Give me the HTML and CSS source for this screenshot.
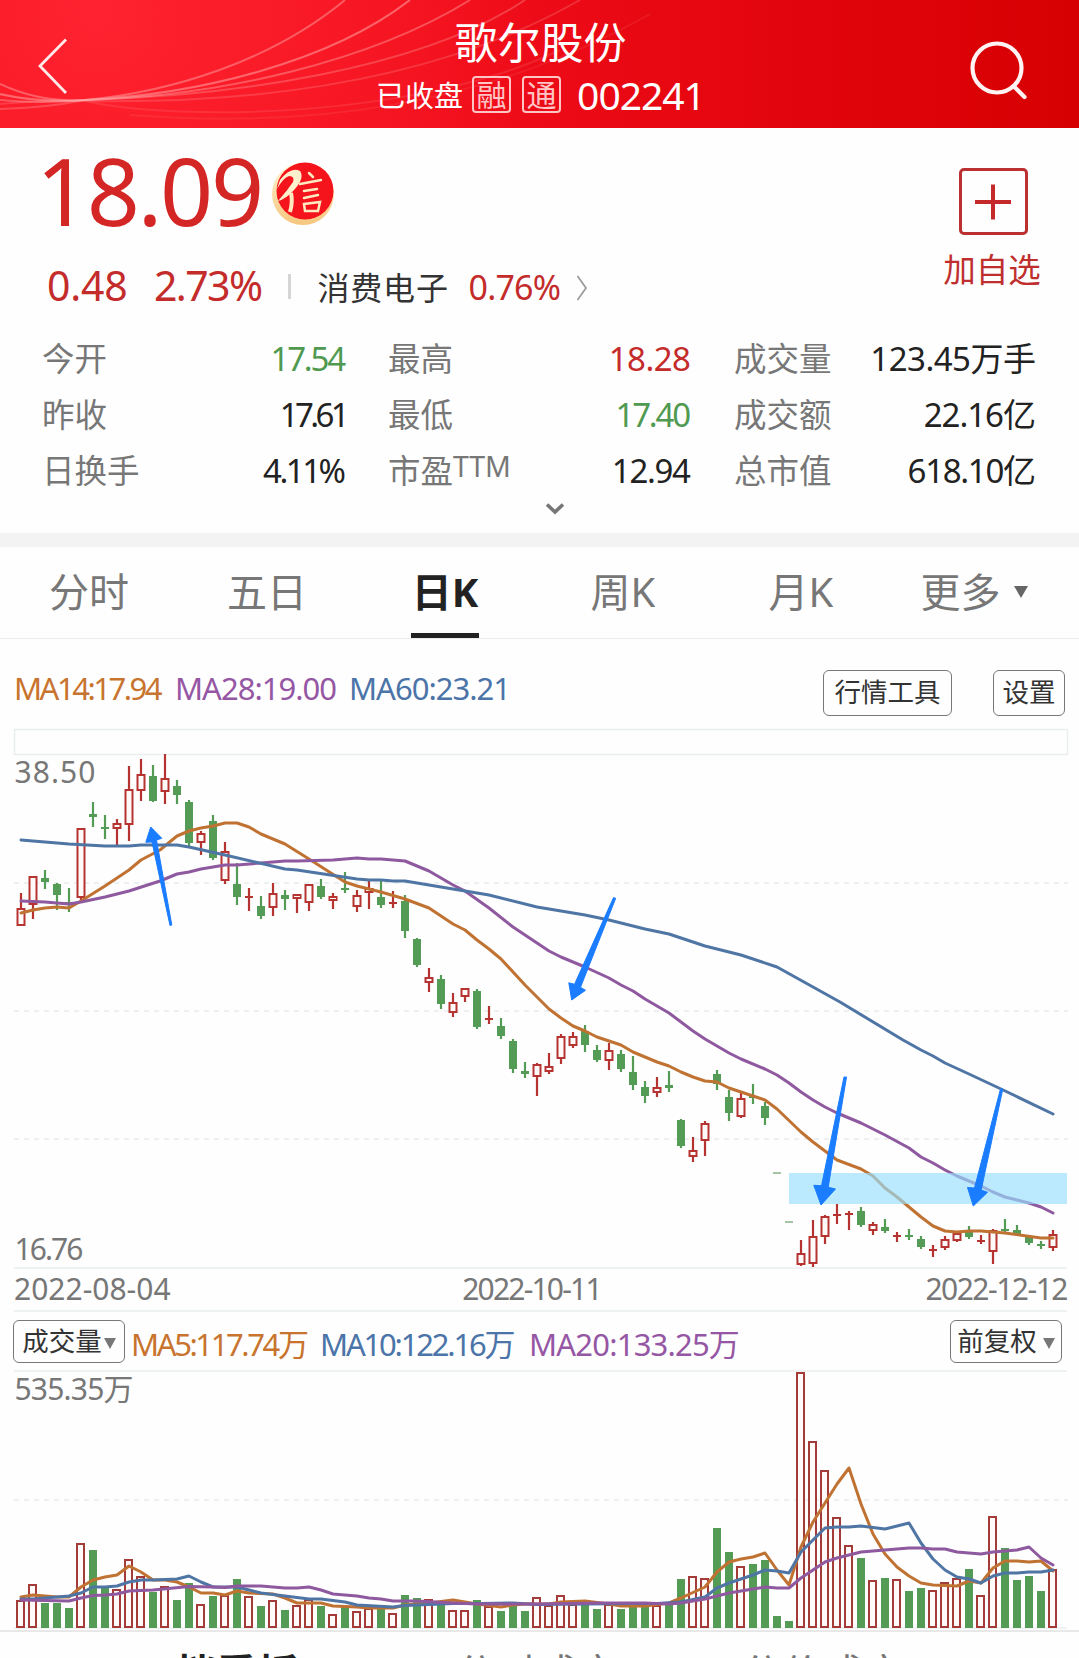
FILE: index.html
```html
<!DOCTYPE html>
<html lang="zh-CN">
<head>
<meta charset="utf-8">
<title>歌尔股份 002241</title>
<link rel="stylesheet" href="styles.css">
</head>
<body>
<div class="page">
  <header class="top">
    <svg class="top-waves" width="1079" height="128" viewBox="0 0 1079 128" fill="none" stroke="#ffb0b0">
      <path d="M0 84Q40 103 85 100C170 92 270 62 345 0" stroke-width="2" opacity=".45"/>
      <path d="M0 94Q40 103 85 100C200 94 330 62 410 0" stroke-width="2.2" opacity=".5"/>
      <path d="M0 100Q40 104 85 100C220 96 370 62 470 0" stroke-width="2" opacity=".4"/>
      <path d="M0 109Q45 108 85 100C230 96 420 70 525 0" stroke-width="2" opacity=".3"/>
      <path d="M0 104Q45 100 85 101C260 104 440 80 580 0" stroke-width="2" opacity=".22"/>
      <path d="M85 101C180 122 420 118 560 50" stroke-width="2" opacity=".14"/>
      <path d="M130 115C300 128 480 110 650 14" stroke-width="2" opacity=".1"/>
    </svg>
    <svg class="back" width="34" height="60" viewBox="0 0 34 60" fill="none" stroke="#ffe9e9" stroke-width="2.8"><path d="M29 3.5L3 30L29 57"/></svg>
    <div class="top-title">
      <h1>歌尔股份</h1>
      <div class="top-sub"><span class="closed">已收盘</span><span class="tag">融</span><span class="tag">通</span><span class="code">002241</span></div>
    </div>
    <svg class="search" width="62" height="62" viewBox="0 0 62 62" fill="none" stroke="#fff3f3" stroke-width="4.2" stroke-linecap="round"><circle cx="29" cy="29" r="24.5"/><path d="M46 47.5L56.5 58"/></svg>
  </header>

  <section class="quote">
    <div class="quote-main">
      <div class="quote-left">
        <div class="price-row">
          <span class="price">18.09</span>
          <svg class="seal" width="64" height="64" viewBox="0 0 64 64">
            <defs><linearGradient id="gold" x1="0" y1="0" x2="0" y2="1"><stop offset="0" stop-color="#fff3cf"/><stop offset="1" stop-color="#f6c77f"/></linearGradient></defs>
            <circle cx="32" cy="32" r="31" fill="url(#gold)"/>
            <circle cx="34" cy="29" r="28.5" fill="#f5141c"/>
            <path d="M9 18Q20 4 29 9Q34 16 23 28Q15 37 7 39Q16 29 22 20Q24 14 18 14Q12 16 6 27Z" fill="#fff0cd"/>
            <path d="M20 31Q22 40 19 50" stroke="#ffe9c0" stroke-width="4" fill="none"/>
            <g stroke="#ffe9c0" stroke-width="2.5" fill="none" stroke-linecap="round"><path d="M38 11L42 15M29 22L50 18M33 29L46 27M33 36L47 33M33 42L49 40L47 49H34Z"/></g>
          </svg>
        </div>
        <div class="change-row">
          <span class="chg up">0.48</span><span class="pct up">2.73%</span><i class="sep"></i>
          <span class="sector">消费电子</span><span class="sector-pct up">0.76%</span>
          <svg class="more" width="12" height="26" viewBox="0 0 12 26" fill="none" stroke="#999" stroke-width="1.7"><path d="M1.5 1L10 13L1.5 25"/></svg>
        </div>
      </div>
      <div class="add">
        <div class="add-box"><svg width="40" height="40" viewBox="0 0 40 40" stroke="#c42a2a" stroke-width="4"><path d="M2 20H38M20 2.500V37.500"/></svg></div>
        <span>加自选</span>
      </div>
    </div>
    <div class="stats">
      <span class="k">今开</span><span class="v down k22">17.54</span>
      <span class="k">最高</span><span class="v up k05">18.28</span>
      <span class="k">成交量</span><span class="v k05">123.45万手</span>
      <span class="k">昨收</span><span class="v k36">17.61</span>
      <span class="k">最低</span><span class="v down k22">17.40</span>
      <span class="k">成交额</span><span class="v k10">22.16亿</span>
      <span class="k">日换手</span><span class="v k25">4.11%</span>
      <span class="k">市盈<small>TTM</small></span><span class="v k13">12.94</span>
      <span class="k">总市值</span><span class="v k13">618.10亿</span>
    </div>
    <svg class="expand" width="20" height="14" viewBox="0 0 20 14" fill="none" stroke="#777" stroke-width="3.6"><path d="M2 2.500L10 10L18 2.500"/></svg>
  </section>

  <nav class="tabs">
    <span>分时</span><span>五日</span><span class="active"><b>日K</b></span><span>周K</span><span>月K</span><span class="last">更多<i class="tri"></i></span>
  </nav>

  <div class="ma-row">
    <span class="c-orange m1 k25">MA14:17.94</span><span class="c-purple m2 k10">MA28:19.00</span><span class="c-blue k10">MA60:23.21</span>
    <span class="btn tools">行情工具</span><span class="btn">设置</span>
  </div>

  <svg id="kline" class="chart" width="1079" height="548" viewBox="0 722 1079 548"></svg>

  <div class="dates"><span>2022-08-04</span><span class="mid k18">2022-10-11</span><span class="k15">2022-12-12</span></div>

  <div class="vol-row">
    <span class="btn vsel">成交量<i class="tri"></i></span>
    <span class="c-orange n1 k24">MA5:117.74万</span><span class="c-blue n2 k22">MA10:122.16万</span><span class="c-purple k09">MA20:133.25万</span>
    <span class="btn adj">前复权<i class="tri"></i></span>
  </div>

  <svg id="volume" class="chart" width="1079" height="260" viewBox="0 1370 1079 260"></svg>

  <nav class="bottom-tabs"><b>五档看板</b><span>分时成交</span><span>分价成交</span></nav>
</div>
<script src="chart.js"></script>
</body>
</html>
```
FILE: styles.css
```css
* { box-sizing: border-box; }
body { margin: 0; background: #fefefe; font-family: "Noto Sans", "Noto Sans CJK SC", sans-serif; color: #222; }
.page { width: 1079px; height: 1658px; overflow: hidden; display: flex; flex-direction: column; }
.page > * { flex-shrink: 0; }
.up { color: #c42b2b; }
.down { color: #4f9a50; }
.c-orange { color: #c8742e; }
.c-purple { color: #9557a4; }
.c-blue { color: #4b74a8; }

.k05 { --ls: -.5px; } .k09 { --ls: -.8px; } .k10 { --ls: -1px; } .k13 { --ls: -1.3px; }
.k15 { --ls: -1.5px; } .k18 { --ls: -1.8px; } .k22 { --ls: -2.2px; }
.k24 { --ls: -2.4px; } .k25 { --ls: -2.5px; } .k36 { --ls: -3.6px; }
[class*="k"] { letter-spacing: var(--ls, normal); }

.top { position: relative; height: 128px; display: flex; align-items: center; justify-content: space-between; padding: 0 51px 0 37px; color: #fff; background: radial-gradient(circle at 9% 10%, #ff2230 0, #fb1c29 15%, transparent 45%), linear-gradient(90deg, #fa1a26 0, #ee0c18 45%, #e2040c 75%, #d60002 100%); }
.top-waves { position: absolute; left: 0; top: 0; }
.back { position: relative; margin-top: 4px; width: 34px; }
.search { position: relative; margin: 12px -2px 0 0; }
.top-title { position: relative; margin-left: 42px; padding-top: 5px; display: flex; flex-direction: column; align-items: center; }
.top-title h1 { margin: 3px 0 0; font-size: 43px; line-height: 52px; font-weight: 400; }
.top-sub { display: flex; align-items: center; height: 51px; font-size: 29px; }
.tag { width: 39px; height: 37px; margin-left: 11px; border: 2px solid #ffc5c5; border-radius: 4px; color: #ffc5c5; font-size: 30px; line-height: 33px; text-align: center; }
.closed { margin-right: -2px; }
.code { margin-left: 16px; font-size: 39px; letter-spacing: -1px; }

.quote { height: 405px; display: flex; flex-direction: column; }
.quote-main { display: flex; justify-content: space-between; height: 203px; }
.price-row { display: flex; align-items: center; height: 123px; padding-left: 36px; }
.price { font-size: 93px; letter-spacing: -2.4px; line-height: 123px; color: #d52626; width: 235px; margin-top: 2px; }
.seal { margin-top: 8px; }
.change-row { display: flex; align-items: center; height: 70px; padding-left: 47px; }
.chg { font-size: 41px; width: 107px; letter-spacing: -.2px; margin-top: -3px; }
.pct { font-size: 41px; width: 134px; letter-spacing: -1.6px; margin-top: -3px; }
.sep { width: 2.500px; height: 25px; background: #d5d5d5; margin-right: 27px; }
.sector { font-size: 32px; letter-spacing: .8px; width: 151px; color: #333; }
.sector-pct { font-size: 34px; width: 107px; letter-spacing: -.8px; margin-top: 2px; }
.more { margin-top: 4px; }
.add { width: 110px; margin-right: 31px; padding-top: 40px; display: flex; flex-direction: column; align-items: center; color: #bf2f2f; font-size: 32.5px; }
.add-box { width: 69px; height: 67px; border: 3px solid #bb3030; border-radius: 5px; display: flex; align-items: center; justify-content: center; }
.add span { margin-top: 12px; line-height: 46px; margin-left: -2px; }
.stats { display: grid; grid-template-columns: 173px 131px 175px 170px 142px 203px; grid-auto-rows: 56px; padding-left: 42px; }
.stats > :nth-child(6n+3) { padding-left: 42px; }
.stats > :nth-child(6n+5) { padding-left: 43px; }
.stats .k { font-size: 32.500px; line-height: 56px; color: #777; white-space: nowrap; }
.k small { font-size: 28.500px; position: relative; top: -6px; letter-spacing: -.2px; }
.stats .v { font-size: 33px; line-height: 56px; text-align: right; white-space: nowrap; padding-right: calc(-1 * var(--ls, 0px)); }
.stats .k36 { padding-right: 0; }
.expand { margin: 3px 0 0 545px; }

.tabs { height: 106px; border-top: 14px solid #f3f3f3; border-bottom: 1px solid #ececec; display: flex; font-size: 40px; line-height: 90px; color: #777; }
.tabs span { width: 178px; text-align: center; }
.tabs .active b { display: inline-block; height: 91px; border-bottom: 5px solid #222; color: #222; padding: 0 1px; }
.tabs .last { width: 189px; padding-right: 21px; }
.tri { display: inline-block; border: 7px solid transparent; border-top: 12px solid #666; border-bottom: 0; }
.tabs .tri { margin-left: 13px; vertical-align: 9px; }

.ma-row { height: 83px; display: flex; align-items: center; padding: 14px 14px 0 14px; font-size: 31px; }
.ma-row > span { white-space: nowrap; }
.ma-row .m1 { width: 161px; }
.ma-row .m2 { width: 174px; }
.btn { border: 1.5px solid #777; border-radius: 6px; color: #333; font-size: 26.5px; text-align: center; }
.ma-row .btn { height: 46px; line-height: 43px; width: 72px; margin-top: 10px; }
.ma-row .tools { width: 129px; margin-left: auto; margin-right: 41px; }

.chart { display: block; }
.chart text { font-family: "Noto Sans", "Noto Sans CJK SC", sans-serif; font-size: 30px; fill: #777; }
.dates { height: 42px; margin: 0 12px 0 14px; border-bottom: 2px solid #eff2f2; display: flex; justify-content: space-between; line-height: 37px; font-size: 30px; color: #777; }
.dates .mid { margin-right: 33px; }
.vol-row { height: 58px; display: flex; align-items: center; padding: 0 17px 0 13px; font-size: 31px; white-space: nowrap; }
.vol-row .c-orange, .vol-row .c-blue, .vol-row .c-purple { margin-top: 2px; }
.vol-row .btn { height: 43px; line-height: 40px; width: 112px; }
.vol-row .n1 { width: 189px; margin-left: 6px; }
.vol-row .n2 { width: 209px; }
.vol-row .adj { margin-left: auto; }
.vol-row .tri { border-width: 11px 6.500px 0; margin-left: 2px; vertical-align: 2px; border-top-color: #777; }
.vol-row .adj .tri { margin-left: 6px; }

.bottom-tabs { border-top: 2px solid #e8e8e8; height: 90px; padding-left: 134px; font-size: 41px; line-height: 82px; color: #777; display: flex; white-space: nowrap; }
.bottom-tabs b { width: 321px; color: #222; }
.bottom-tabs span { width: 286px; }
```
FILE: chart.js
```js
// Each candle: kind (r = rise, g = fall), high, body top, body bottom, low, volume top
const candles = `
r 893 909 925 926 1601|r 876 877 904 919 1585|g 870 878 882 889 1603|g 883 884 895 910 1603|g 888 902 904 912 1608
r 828 829 897 900 1544|g 802 814 817 827 1550|g 815 827 829 839 1587|r 819 824 828 847 1590|r 766 790 824 841 1560
r 759 775 790 801 1577|g 765 776 801 802 1592|r 754 779 791 804 1587|g 780 786 795 804 1600|g 800 802 843 846 1583
r 831 834 842 855 1605|g 815 821 858 860 1596|r 842 852 880 884 1596|g 863 884 897 905 1579|r 888 896 897 911 1597
g 896 906 916 919 1606|r 883 894 907 916 1601|g 890 895 899 910 1610|r 894 895 898 913 1606|r 884 885 902 911 1600
g 879 886 897 899 1606|r 893 897 900 909 1615|g 872 888 889 893 1607|r 890 896 906 912 1612|r 880 889 892 909 1609
g 880 897 905 908 1609|r 891 902 903 908 1614|g 895 901 931 938 1595|g 938 939 965 967 1598|r 968 978 982 992 1600
g 975 979 1004 1009 1605|r 993 1003 1012 1017 1611|r 988 989 996 1002 1611|g 989 991 1027 1029 1600|r 1006 1018 1020 1024 1607
g 1018 1026 1036 1039 1611|g 1039 1041 1069 1073 1602|g 1062 1071 1074 1078 1611|r 1063 1065 1076 1096 1598|r 1053 1067 1071 1074 1606
r 1034 1037 1058 1064 1596|r 1032 1037 1045 1048 1605|g 1025 1031 1045 1052 1604|g 1045 1050 1060 1062 1609|r 1043 1051 1060 1070 1605
g 1050 1054 1069 1072 1609|g 1056 1072 1085 1090 1605|g 1081 1087 1096 1103 1605|r 1077 1088 1092 1097 1606|g 1071 1085 1088 1092 1604
g 1119 1120 1146 1148 1579|r 1137 1151 1156 1162 1577|r 1121 1124 1140 1156 1579|g 1070 1074 1084 1090 1528|g 1090 1097 1113 1121 1552
r 1093 1099 1116 1118 1567|g 1084 1096 1097 1104 1564|g 1102 1106 1118 1125 1560|g 1173 1172 1174 1173 1616|g 1222 1221 1223 1222 1621
r 1240 1254 1264 1266 1373|r 1220 1237 1263 1267 1442|r 1215 1217 1236 1244 1471|r 1204 1214 1216 1224 1518|r 1211 1213 1215 1230 1546
g 1207 1211 1225 1227 1558|r 1222 1225 1230 1235 1581|g 1219 1227 1231 1233 1578|r 1232 1235 1236 1242 1580|g 1229 1235 1237 1240 1591
g 1236 1239 1247 1249 1588|r 1245 1249 1250 1257 1591|r 1236 1240 1247 1250 1583|r 1231 1234 1240 1242 1579|g 1226 1231 1237 1239 1569
r 1235 1240 1241 1244 1596|r 1229 1231 1251 1264 1517|g 1219 1229 1230 1233 1548|g 1225 1230 1235 1236 1580|g 1235 1237 1243 1245 1576
g 1241 1244 1246 1249 1591|r 1230 1235 1247 1251 1570`.trim().split(/[|\n]/).map(s => {
  const [k, ...n] = s.split(' ');
  return [k, ...n.map(Number)];
});

const ma = {
  orange: '21,913 33,910 45,908 57,907 69,908 81,901 105,886 129,870 141,860 160,850 177,836 189,831 201,828 213,826 225,823 237,823 249,827 261,834 285,844 309,859 345,882 357,886 381,892 405,899 429,908 453,924 465,930 477,940 489,949 501,959 525,985 549,1009 561,1018 573,1026 585,1031 597,1037 609,1041 621,1045 633,1052 657,1062 669,1066 681,1072 693,1077 705,1081 717,1082 729,1088 753,1096 765,1100 777,1109 801,1132 813,1142 837,1160 861,1169 873,1176 885,1188 897,1197 909,1207 921,1217 933,1226 945,1231 957,1232 969,1231 981,1231 1005,1233 1041,1238 1053,1238',
  purple: '21,901 45,902 69,904 81,902 105,897 129,891 160,881 177,874 189,872 201,869 225,865 237,865 261,863 285,861 297,861 333,860 357,858 369,859 381,859 405,861 429,871 441,878 453,885 465,891 489,908 513,927 549,951 561,957 585,967 609,978 621,985 633,991 645,999 669,1013 693,1031 705,1039 729,1053 741,1059 765,1069 777,1075 789,1083 801,1092 813,1100 825,1107 837,1113 861,1123 885,1135 909,1148 921,1157 933,1163 945,1170 957,1176 969,1181 981,1186 993,1192 1005,1197 1017,1200 1029,1203 1041,1207 1053,1213',
  blue: '21,840 33,841 69,844 105,846 129,846 141,845 177,845 189,847 225,855 285,869 297,870 357,879 369,880 381,880 393,881 405,881 429,885 465,891 489,895 537,907 585,915 609,920 645,929 669,934 705,946 741,955 777,967 813,987 840,1002 903,1040 921,1050 933,1056 945,1063 969,1074 1001,1089 1053,1114'
};
const vma = {
  orange: '21,1597 33,1595 57,1597 69,1597 81,1587 93,1580 105,1577 117,1575 129,1566 141,1572 153,1580 165,1580 177,1582 189,1587 201,1593 213,1593 225,1595 237,1591 249,1593 273,1594 285,1598 297,1603 321,1603 333,1606 357,1607 369,1608 393,1608 405,1605 429,1603 453,1600 477,1604 501,1607 513,1605 525,1604 549,1604 561,1602 585,1601 609,1604 621,1606 645,1606 669,1603 681,1598 705,1587 717,1572 729,1562 741,1559 753,1557 765,1553 777,1570 789,1585 801,1547 813,1522 825,1503 837,1484 849,1468 861,1504 873,1534 885,1554 897,1567 909,1576 921,1583 933,1585 957,1586 969,1581 981,1583 993,1568 1005,1561 1017,1561 1029,1562 1041,1561 1053,1571',
  blue: '21,1599 33,1599 45,1598 57,1597 69,1596 81,1593 93,1587 105,1587 117,1586 129,1582 141,1580 153,1580 177,1579 189,1576 201,1582 213,1587 237,1587 249,1590 261,1593 309,1599 321,1599 345,1602 357,1605 393,1607 405,1605.5 453,1603.5 480,1603.5 513,1603 537,1604.5 585,1604 633,1603.5 657,1603.5 681,1602 705,1597 717,1588 729,1583 753,1575 765,1570 777,1571 789,1573 801,1552 813,1540 825,1528 837,1527 849,1527 861,1526 885,1529 909,1523 921,1543 933,1559 945,1570 957,1577 969,1579 981,1583 993,1576 1005,1573 1017,1573 1029,1572 1041,1572 1053,1570',
  purple: '21,1600 69,1601 81,1598 93,1595.5 105,1595 117,1594 129,1591 153,1590 189,1586.5 213,1587 225,1587.5 237,1586 261,1586 285,1588 297,1588 309,1587 321,1590 333,1594 357,1596 369,1598 381,1599 393,1601 417,1601 453,1603 477,1604 537,1604 600,1603 645,1603 669,1604 681,1603 705,1599 717,1596 729,1593 753,1589 765,1587 777,1588 789,1588 801,1578 813,1570 825,1562 837,1558 861,1552 897,1549 909,1548 921,1548 933,1549 945,1549 957,1552 981,1554 993,1552 1017,1550 1029,1547 1041,1558 1053,1565'
};

const RED = '#b53331', GREEN = '#549c56';
const colors = { orange: '#c07232', purple: '#8f599f', blue: '#4f75a4' };
const rect = (x, y, w, h, a) => `<rect x="${x}" y="${y}" width="${w}" height="${h}" ${a}/>`;
const line = (pts, c) => `<polyline points="${pts}" fill="none" stroke="${c}" stroke-width="3" stroke-linejoin="round" stroke-linecap="round"/>`;
const grid = y => `<path d="M14 ${y}H1068" stroke="#edf0f0" stroke-width="2" stroke-dasharray="5 5"/>`;
const rule = y => `<path d="M14 ${y}H1067" stroke="#eff2f2" stroke-width="2"/>`;
const arrow = pts => `<polygon points="${pts}" fill="#1a7cff" stroke="#1a7cff" stroke-width="1"/>`;

let k = rect(14.5, 729.5, 1053, 25, 'fill="none" stroke="#ebeeee" stroke-width="1.5"');
k += [883, 1011, 1139].map(grid).join('') + rule(1268);
candles.forEach(([kind, hi, top, bot, lo], i) => {
  const x = 21 + 12 * i, c = kind === 'r' ? RED : GREEN;
  if (kind === 'r' && bot - top > 2) {
    k += `<path d="M${x} ${hi}V${top}M${x} ${bot}V${lo}" stroke="${c}" stroke-width="2.2"/>`;
    k += rect(x - 3.5, top, 7, bot - top, `fill="#fffafa" stroke="${c}" stroke-width="2"`);
  } else if (hi > top && lo < bot) {
    // no trading range: the session is a thin dash
    k += rect(x - 4, hi - 1, 8, 2, 'fill="#a5c5a6"');
  } else {
    k += `<path d="M${x} ${hi}V${lo}" stroke="${c}" stroke-width="2.2"/>`;
    k += rect(x - 4, top, 8, Math.max(2, bot - top), `fill="${c}"`);
  }
});
k += line(ma.orange, colors.orange) + line(ma.purple, colors.purple) + line(ma.blue, colors.blue);
k += rect(789, 1173, 278, 31, 'fill="#96dfff" fill-opacity=".65"');
k += arrow('150.700,827 145.800,842.300 152,842 170,925.500 171.800,925 156.500,840 161.800,838.300');
k += arrow('571.700,1000 568.800,982.800 574.500,984.300 613.500,897.600 615.700,898.300 580.500,987.300 585.500,990.300');
k += arrow('821,1205 813.800,1185.300 821.500,1185.700 844,1077 846.500,1077 828.200,1187.300 835.500,1189');
k += arrow('973.300,1206 967.500,1187.500 974.500,1188 1000.500,1089 1002.800,1089 981.200,1190 987.500,1192.300');
k += '<text x="14.500" y="783" textLength="81">38.50</text><text x="14.500" y="1260" textLength="69">16.76</text>';
document.getElementById('kline').innerHTML = k;

let v = rule(1371) + grid(1500) + rule(1628);
candles.forEach(([kind, , , , , top], i) => {
  const x = 21 + 12 * i;
  v += kind === 'r'
    ? rect(x - 4, top, 7, 1627 - top, 'fill="#fffafa" stroke="#a33b39" stroke-width="2"')
    : rect(x - 4, top, 8, 1628 - top, `fill="${GREEN}"`);
});
v += line(vma.orange, colors.orange) + line(vma.blue, colors.blue) + line(vma.purple, colors.purple);
v += '<text x="14.500" y="1400" textLength="119">535.35万</text>';
document.getElementById('volume').innerHTML = v;
```
